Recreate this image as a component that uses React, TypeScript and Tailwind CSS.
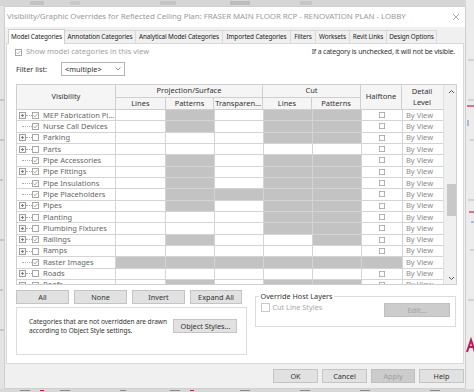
import React from "react";

type Row = { name: string; exp: boolean; chk: boolean; g: number[]; noHt?: boolean };

const rows: Row[] = [
  { name: "MEP Fabrication Pi...", exp: true, chk: true, g: [0, 1, 0, 1, 1] },
  { name: "Nurse Call Devices", exp: false, chk: true, g: [0, 1, 0, 1, 1] },
  { name: "Parking", exp: true, chk: false, g: [0, 0, 0, 1, 1] },
  { name: "Parts", exp: true, chk: false, g: [0, 0, 0, 0, 0] },
  { name: "Pipe Accessories", exp: false, chk: true, g: [0, 1, 0, 1, 1] },
  { name: "Pipe Fittings", exp: true, chk: true, g: [0, 1, 0, 1, 1] },
  { name: "Pipe Insulations", exp: false, chk: true, g: [0, 1, 0, 1, 1] },
  { name: "Pipe Placeholders", exp: false, chk: true, g: [0, 1, 1, 1, 1] },
  { name: "Pipes", exp: true, chk: true, g: [0, 1, 0, 1, 1] },
  { name: "Planting", exp: true, chk: false, g: [0, 0, 0, 1, 1] },
  { name: "Plumbing Fixtures", exp: true, chk: false, g: [0, 0, 0, 1, 1] },
  { name: "Railings", exp: true, chk: true, g: [0, 1, 0, 0, 1] },
  { name: "Ramps", exp: true, chk: false, g: [0, 0, 0, 0, 0] },
  { name: "Raster Images", exp: false, chk: true, g: [1, 1, 1, 1, 1], noHt: true },
  { name: "Roads", exp: true, chk: false, g: [0, 0, 0, 0, 0] },
  { name: "Roofs", exp: true, chk: false, g: [0, 1, 0, 1, 1] },
];

const colW = ["w-[50px]", "w-[49px]", "w-[49px]", "w-[49px]", "w-[49px]"];

const tabs: { t: string; w: string }[] = [
  { t: "Annotation Categories", w: "w-[71px]" },
  { t: "Analytical Model Categories", w: "w-[87px]" },
  { t: "Imported Categories", w: "w-[68px]" },
  { t: "Filters", w: "w-[25px]" },
  { t: "Worksets", w: "w-[34px]" },
  { t: "Revit Links", w: "w-[37px]" },
  { t: "Design Options", w: "w-[50px]" },
];

function Check({ checked, size = 7, color = "#9a9a9a" }: { checked: boolean; size?: number; color?: string }) {
  return (
    <svg width={size} height={size} viewBox="0 0 7 7" className="shrink-0">
      <rect x="0.5" y="0.5" width="6" height="6" fill="#fff" stroke="#a8a8a8" strokeWidth="1" />
      {checked && <path d="M1.6 3.6 L2.9 4.9 L5.4 1.9" fill="none" stroke={color} strokeWidth="0.9" />}
    </svg>
  );
}

function Expander() {
  return (
    <svg width="7" height="7" viewBox="0 0 7 7" className="shrink-0">
      <rect x="0.5" y="0.5" width="6" height="6" fill="#f4f4f4" stroke="#a0a0a0" strokeWidth="1" />
      <path d="M2 3.5 H5 M3.5 2 V5" stroke="#777" strokeWidth="0.9" />
    </svg>
  );
}

function Btn({ children, className = "", disabled = false }: { children: React.ReactNode; className?: string; disabled?: boolean }) {
  return (
    <div
      className={`flex items-center justify-center border text-[7.3px] whitespace-nowrap ${
        disabled ? "bg-[#cccccc] border-[#bfbfbf] text-[#a0a0a0]" : "bg-[#e1e1e1] border-[#c4c4c4] text-[#333]"
      } ${className}`}
    >
      {children}
    </div>
  );
}

export default function App() {
  return (
    <div className="relative w-[474px] h-[392px] overflow-hidden bg-[#e4e4e4] font-['Noto_Sans','Open_Sans',sans-serif]">
      {/* background CAD drawing */}
      <svg className="absolute inset-0" width="474" height="392">
        <rect x="0" y="0" width="474" height="6" fill="#d6d6d6" />
        <rect x="30" y="1" width="14" height="4" fill="#c2c2c2" />
        <rect x="70" y="1" width="10" height="4" fill="#c8c8c8" />
        <rect x="160" y="1" width="16" height="4" fill="#c4c4c4" />
        <rect x="230" y="1" width="20" height="4" fill="#bdbdbd" />
        <rect x="300" y="1" width="12" height="4" fill="#c6c6c6" />
        <rect x="466" y="0" width="8" height="392" fill="#ececec" />
        <path d="M468 60 H474 M468 100 H474 M470 140 H474 M468 200 H474 M470 250 H474 M468 300 H474" stroke="#b9b9b9" strokeWidth="1" />
        <path d="M467 106 H474 M469 212 H474" stroke="#d04a78" strokeWidth="1.5" />
        <path d="M468 120 V126 M471 222 H474" stroke="#6a8ad0" strokeWidth="1" />
        <path d="M467 352 L471 340 L475 352 M469 347 H474" fill="none" stroke="#c2185b" strokeWidth="2" />
        <rect x="0" y="389" width="474" height="3" fill="#d8d8d8" />
        <path d="M20 390.5 H30 M60 390.5 H70 M120 390.5 H126 M170 390.5 H180 M240 390.5 H250 M300 390.5 H310 M360 390.5 H370 M430 390.5 H440" stroke="#8a8a8a" strokeWidth="1" />
        <path d="M40 390.5 H44 M190 390.5 H194" stroke="#c2185b" strokeWidth="1" />
        <path d="M0 100 H4 M0 140 H4 M0 180 H3 M0 240 H4 M0 290 H3 M0 330 H4" stroke="#a8a8a8" strokeWidth="1" />
      </svg>

      {/* dialog window */}
      <div className="absolute left-[4px] top-[6px] w-[462px] h-[383px] flex flex-col bg-[#f0f0f0] border border-[#cfcfcf]">
        {/* title bar */}
        <div className="h-[20px] shrink-0 bg-white flex items-center justify-between pl-[2px] pr-[5px]">
          <span className="text-[7.9px] text-[#9a9a9a] whitespace-nowrap tracking-[-0.05px]">
            Visibility/Graphic Overrides for Reflected Ceiling Plan: FRASER MAIN FLOOR RCP - RENOVATION PLAN - LOBBY
          </span>
          <svg width="8" height="8" viewBox="0 0 8 8">
            <path d="M1 1 L7 7 M7 1 L1 7" stroke="#a0a0a0" strokeWidth="0.9" />
          </svg>
        </div>

        {/* tabs */}
        <div className="h-[16px] shrink-0 flex items-end pl-[3px] text-[6.4px] tracking-[-0.12px] text-[#222]">
          <div className="w-[57px] h-[15px] flex items-center justify-center bg-white border border-b-0 border-[#d0d0d0] relative top-[1px] whitespace-nowrap">
            Model Categories
          </div>
          {tabs.map(({ t, w }) => (
            <div key={t} className={`${w} h-[13px] flex items-center justify-center border-r border-t border-[#d9d9d9] bg-[#f0f0f0] whitespace-nowrap`}>
              {t}
            </div>
          ))}
        </div>

        {/* panel */}
        <div className="h-[321px] shrink-0 mx-[1px] bg-white border border-[#d9d9d9] flex flex-col pl-[9px] pr-[7px]">
          <div className="h-[14px] flex items-center justify-between mt-[1px]">
            <div className="flex items-center gap-[4px] -ml-[1px]">
              <Check checked size={7} color="#b0b0b0" />
              <span className="text-[7.5px] text-[#a0a0a0]">Show model categories in this view</span>
            </div>
            <span className="text-[7px] tracking-[-0.2px] text-[#333] mr-[1px] whitespace-nowrap">If a category is unchecked, it will not be visible.</span>
          </div>
          <div className="h-[14px] flex items-center mt-[3px]">
            <span className="w-[45px] text-[7.3px] text-[#333]">Filter list:</span>
            <div className="w-[64px] h-[14px] border border-[#b4b4b4] flex items-center justify-between px-[3px]">
              <span className="text-[7.3px] text-[#333]">&lt;multiple&gt;</span>
              <svg width="6" height="4" viewBox="0 0 6 4">
                <path d="M0.5 0.5 L3 3 L5.5 0.5" fill="none" stroke="#777" strokeWidth="0.8" />
              </svg>
            </div>
          </div>

          {/* table */}
          <div className="mt-[8px] h-[201px] w-[441px] border border-[#cfcfcf] flex overflow-hidden">
            <div className="w-[426px] flex flex-col">
              {/* header */}
              <div className="flex h-[25px] shrink-0 bg-[#f5f5f5] text-[7.5px] text-[#333] border-b border-[#cfcfcf]">
                <div className="w-[99px] border-r border-[#cfcfcf] flex items-center justify-center">Visibility</div>
                <div className="w-[147px] border-r border-[#cfcfcf] flex flex-col">
                  <div className="h-[13px] border-b border-[#cfcfcf] flex items-center justify-center">Projection/Surface</div>
                  <div className="flex-1 flex">
                    <div className="w-[50px] border-r border-[#cfcfcf] flex items-center justify-center">Lines</div>
                    <div className="w-[49px] border-r border-[#cfcfcf] flex items-center justify-center">Patterns</div>
                    <div className="w-[48px] flex items-center justify-center whitespace-nowrap overflow-hidden">Transparen...</div>
                  </div>
                </div>
                <div className="w-[98px] border-r border-[#cfcfcf] flex flex-col">
                  <div className="h-[13px] border-b border-[#cfcfcf] flex items-center justify-center">Cut</div>
                  <div className="flex-1 flex">
                    <div className="w-[49px] border-r border-[#cfcfcf] flex items-center justify-center">Lines</div>
                    <div className="w-[48px] flex items-center justify-center">Patterns</div>
                  </div>
                </div>
                <div className="w-[41px] border-r border-[#cfcfcf] flex items-center justify-center">Halftone</div>
                <div className="w-[40px] flex items-center justify-center text-center leading-[11px]">
                  Detail
                  <br />
                  Level
                </div>
              </div>
              {/* rows */}
              {rows.map((r) => (
                <div key={r.name} className="flex h-[11.33px] shrink-0 border-b border-[#d4d4d4]">
                  <div className="w-[99px] shrink-0 border-r border-[#d4d4d4] flex items-center pl-[2px]">
                    {r.exp ? (
                      <>
                        <Expander />
                        <div className="w-[6px] border-t border-dotted border-[#aaa]" />
                      </>
                    ) : (
                      <>
                        <div className="w-[3px]" />
                        <div className="w-[10px] border-t border-dotted border-[#aaa]" />
                      </>
                    )}
                    <Check checked={r.chk} />
                    <span className="ml-[4px] text-[7.5px] text-[#666] whitespace-nowrap">{r.name}</span>
                  </div>
                  {r.g.map((g, i) => (
                    <div key={i} className={`${colW[i]} shrink-0 border-r border-[#d4d4d4] ${g ? "bg-[#c3c3c3]" : "bg-white"}`} />
                  ))}
                  <div className={`w-[41px] shrink-0 border-r border-[#d4d4d4] flex items-center justify-center ${r.noHt ? "bg-[#c3c3c3]" : ""}`}>
                    {!r.noHt && <Check checked={false} size={6} />}
                  </div>
                  <div className="w-[40px] shrink-0 flex items-center pl-[3px] text-[7.5px] text-[#8a8a8a] whitespace-nowrap">By View</div>
                </div>
              ))}
            </div>
            {/* scrollbar */}
            <div className="flex-1 bg-[#f0f0f0] border-l border-[#e0e0e0] flex flex-col items-center">
              <svg width="7" height="5" viewBox="0 0 7 5" className="mt-[4px] ml-[2px]">
                <path d="M1 4 L3.5 1.5 L6 4" fill="none" stroke="#555" strokeWidth="1" />
              </svg>
              <div className="mt-[90px] w-[9px] h-[32px] bg-[#c8c8c8] ml-[3px]" />
              <svg width="7" height="5" viewBox="0 0 7 5" className="mt-auto mb-[3px] ml-[2px]">
                <path d="M1 1 L3.5 3.5 L6 1" fill="none" stroke="#555" strokeWidth="1" />
              </svg>
            </div>
          </div>

          {/* lower section */}
          <div className="flex mt-[5px]">
            <div className="w-[232px] flex flex-col">
              <div className="flex gap-[5px]">
                <Btn className="w-[53px] h-[14px]">All</Btn>
                <Btn className="w-[53px] h-[14px]">None</Btn>
                <Btn className="w-[53px] h-[14px]">Invert</Btn>
                <Btn className="w-[52px] h-[14px]">Expand All</Btn>
              </div>
              <div className="mt-[3px] h-[48px] border border-[#dcdcdc] flex items-start pl-[12px] pt-[10px] pr-[9px] justify-between">
                <div className="text-[6.6px] tracking-[-0.05px] text-[#333] leading-[8.5px] whitespace-nowrap">
                  Categories that are not overridden are drawn
                  <br />
                  according to Object Style settings.
                </div>
                <Btn className="w-[64px] h-[14px] shrink-0 mt-[1px]">Object Styles...</Btn>
              </div>
            </div>
            <div className="ml-[8px] mt-[6px] w-[201px] h-[31px] border border-[#dcdcdc] relative">
              <span className="absolute -top-[6px] left-[3px] bg-white px-[1px] text-[7.3px] text-[#333] leading-[10px]">Override Host Layers</span>
              <div className="flex items-start justify-between pl-[5px] pr-[5px] pt-[5px]">
                <div className="flex items-center gap-[2px]">
                  <svg width="9" height="9" viewBox="0 0 9 9">
                    <rect x="0.5" y="0.5" width="8" height="8" fill="#fff" stroke="#c8c8c8" />
                  </svg>
                  <span className="text-[7.3px] text-[#a8a8a8]">Cut Line Styles</span>
                </div>
                <Btn disabled className="w-[66px] h-[14px] mt-[1px]">Edit...</Btn>
              </div>
            </div>
          </div>
        </div>

        {/* bottom buttons */}
        <div className="flex-1 flex items-center justify-end pr-[1px] gap-[4px]">
          <Btn className="w-[45px] h-[14px]">OK</Btn>
          <Btn className="w-[45px] h-[14px]">Cancel</Btn>
          <Btn disabled className="w-[44px] h-[14px]">Apply</Btn>
          <Btn className="w-[45px] h-[14px]">Help</Btn>
        </div>
      </div>
    </div>
  );
}
